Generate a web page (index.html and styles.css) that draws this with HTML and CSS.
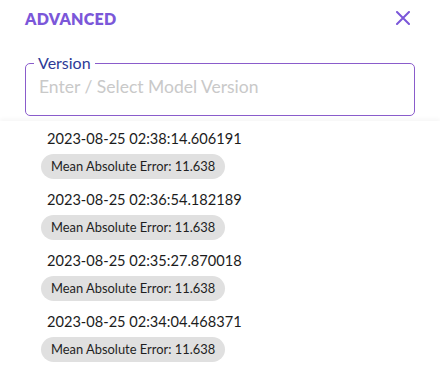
FILE: index.html
```html
<!DOCTYPE html>
<html>
<head>
<meta charset="utf-8">
<link rel="stylesheet" href="styles.css">
</head>
<body>
<div class="panel">
  <div class="header">
    <div class="title">ADVANCED</div>
    <button class="close" aria-label="close">
      <svg width="14" height="14" viewBox="0 0 14 14"><path d="M1 1L13 13M13 1L1 13" stroke="#7b57d9" stroke-width="2" stroke-linecap="round"/></svg>
    </button>
  </div>
  <fieldset class="field">
    <legend class="legend">Version</legend>
    <div class="placeholder">Enter / Select Model Version</div>
  </fieldset>
  <div class="list">
    <div class="item">
      <div class="date">2023-08-25 02:38:14.606191</div>
      <div class="chip">Mean Absolute Error: 11.638</div>
    </div>
    <div class="item">
      <div class="date">2023-08-25 02:36:54.182189</div>
      <div class="chip">Mean Absolute Error: 11.638</div>
    </div>
    <div class="item">
      <div class="date">2023-08-25 02:35:27.870018</div>
      <div class="chip">Mean Absolute Error: 11.638</div>
    </div>
    <div class="item">
      <div class="date">2023-08-25 02:34:04.468371</div>
      <div class="chip">Mean Absolute Error: 11.638</div>
    </div>
  </div>
</div>
</body>
</html>
```
FILE: styles.css
```css
* { box-sizing: border-box; }
html, body { margin: 0; padding: 0; background: #fff; }
body { font-family: Lato, "Open Sans", sans-serif; color: #1f1f1f; }
.panel { width: 440px; height: 368px; overflow: hidden; padding: 0 27px 0 25px; }
.header { display: flex; justify-content: space-between; align-items: center; height: 36px; padding-top: 0; }
.title { font-size: 16px; font-weight: 800; color: #7b57d9; letter-spacing: 0.3px; }
.close { border: 0; background: none; padding: 0; margin-right: 3px; display: flex; }
.field { margin: 19px -2px 0 0; padding: 0 13px; height: 61px; border: 1px solid #8a5ccb; border-radius: 5px; }
.legend { padding: 0 4px; margin-left: -5px; font-size: 16px; color: #2e3a97; line-height: 16px; }
.placeholder { font-size: 17.5px; color: #c9c9c9; padding-top: 5px; }
.list { margin: 5px -27px 0 -25px; padding: 8px 0 0 41px; box-shadow: 0 -2px 4px rgba(0,0,0,0.04); }
.item { display: flex; flex-direction: column; align-items: flex-start; gap: 5px; padding-bottom: 11px; }
.date { font-size: 14.6px; line-height: 20px; margin-left: 6px; color: #1c1c1c; }
.chip { background: #e0e0e0; border-radius: 13px; height: 25px; line-height: 25px; padding: 0 10px 0 10px; font-size: 12.9px; color: #1f1f1f; }
```
